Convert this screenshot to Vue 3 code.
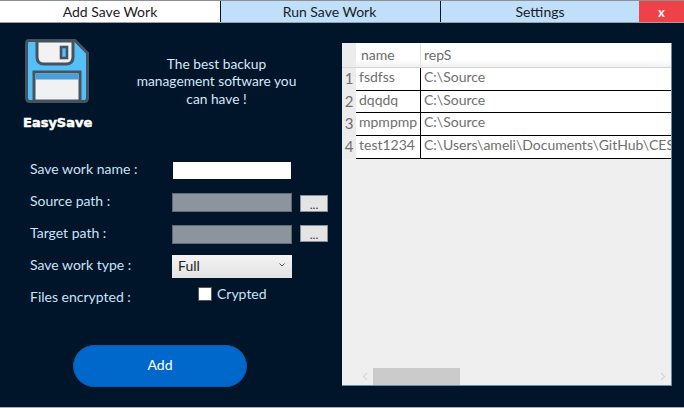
<script setup>
const tabs = [
  { label: 'Add Save Work', active: true },
  { label: 'Run Save Work', active: false },
  { label: 'Settings', active: false },
]

const fields = [
  { label: 'Save work name :', type: 'text' },
  { label: 'Source path :', type: 'path' },
  { label: 'Target path :', type: 'path' },
  { label: 'Save work type :', type: 'select' },
  { label: 'Files encrypted :', type: 'check' },
]

const rows = [
  { id: 1, name: 'fsdfss', repS: 'C:\\Source' },
  { id: 2, name: 'dqqdq', repS: 'C:\\Source' },
  { id: 3, name: 'mpmpmp', repS: 'C:\\Source' },
  { id: 4, name: 'test1234', repS: 'C:\\Users\\ameli\\Documents\\GitHub\\CESI\\Source' },
]
</script>

<template>
  <div class="window">
    <nav class="tabs">
      <div
        v-for="tab in tabs"
        :key="tab.label"
        class="tab"
        :class="{ active: tab.active }"
      >
        {{ tab.label }}
      </div>
      <div class="close">x</div>
    </nav>

    <main class="content">
      <section class="left">
        <div class="top">
          <div class="brand">
            <svg class="logo" viewBox="0 0 64 64" width="64" height="64">
              <path d="M4 1.5H50L62.5 14V59Q62.5 62.5 59 62.5H5Q1.5 62.5 1.5 59V4Q1.5 1.5 4 1.5Z" fill="#55c0f8" stroke="#46535f" stroke-width="3" />
              <path d="M12 2H48V18Q48 25 41 25H19Q12 25 12 18Z" fill="#f2f2f3" stroke="#46535f" stroke-width="3" />
              <rect x="36" y="8" width="6" height="11" fill="#55c0f8" stroke="#46535f" stroke-width="2.6" />
              <rect x="9" y="33" width="46" height="29" fill="#f0f1f3" stroke="#46535f" stroke-width="3" />
              <rect x="10.5" y="34.5" width="43" height="6" fill="#4a9fd8" />
            </svg>
            <div class="brand-name">EasySave</div>
          </div>
          <p class="tagline">The best backup<br />management software you<br />can have !</p>
        </div>

        <form class="form" @submit.prevent>
          <div v-for="field in fields" :key="field.label" class="form-row">
            <label class="label">{{ field.label }}</label>
            <div v-if="field.type === 'text'" class="input-white"></div>
            <template v-else-if="field.type === 'path'">
              <div class="input-grey"></div>
              <button type="button" class="browse">...</button>
            </template>
            <div v-else-if="field.type === 'select'" class="select">
              <span>Full</span>
              <svg width="6" height="4" viewBox="0 0 6 4"><path d="M0.5 0.5L3 3L5.5 0.5" fill="none" stroke="#555" stroke-width="1" /></svg>
            </div>
            <div v-else class="check">
              <span class="box"></span>
              <span>Crypted</span>
            </div>
          </div>
          <button type="button" class="add">Add</button>
        </form>
      </section>

      <section class="grid">
        <div class="table">
          <div class="head">
            <div class="row-head"></div>
            <div class="col-name">name</div>
            <div class="col-rep">repS</div>
          </div>
          <div v-for="row in rows" :key="row.id" class="row">
            <div class="row-head">{{ row.id }}</div>
            <div class="col-name cell">{{ row.name }}</div>
            <div class="col-rep cell">{{ row.repS }}</div>
          </div>
        </div>
        <div class="scrollbar">
          <svg class="arrow" width="6" height="9" viewBox="0 0 6 9"><path d="M5 1L1.5 4.5L5 8" fill="none" stroke="#d4d4d4" stroke-width="1.2" /></svg>
          <div class="track"><div class="thumb"></div></div>
          <svg class="arrow" width="6" height="9" viewBox="0 0 6 9"><path d="M1 1L4.5 4.5L1 8" fill="none" stroke="#d4d4d4" stroke-width="1.2" /></svg>
        </div>
      </section>
    </main>
  </div>
</template>

<style>
html, body { margin: 0; background: #00142a; }
</style>

<style scoped>
.window {
  width: 684px;
  height: 408px;
  display: flex;
  flex-direction: column;
  background: #00142a;
  font-family: Lato, "Open Sans", sans-serif;
  border-bottom: 1px solid #a8aeb4;
  box-sizing: border-box;
  overflow: hidden;
}

/* tabs */
.tabs {
  display: flex;
  height: 23px;
  box-sizing: border-box;
  border-top: 1px solid #8d9196;
  border-bottom: 1px solid #9aa0a6;
  flex-shrink: 0;
}
.tab {
  width: 219px;
  margin-right: 1px;
  background: #bfdffb;
  color: #1c1c1c;
  font-size: 14px;
  line-height: 21px;
  text-align: center;
}
.tab.active {
  width: 220px;
  background: #fff;
}
.tab:nth-child(2) { padding-right: 2px; width: 217px; }
.tab:nth-child(3) { width: 198px; margin-right: 0; }
.close {
  flex: 1;
  background: #ef4148;
  color: #fff;
  font-size: 13px;
  font-weight: 700;
  line-height: 22px;
  text-align: center;
}

.content {
  flex: 1;
  display: flex;
  min-height: 0;
}

/* left side */
.left {
  width: 342px;
  flex-shrink: 0;
  box-sizing: border-box;
  padding-top: 16px;
}
.top { display: flex; }
.brand {
  width: 115px;
  padding-left: 23px;
  box-sizing: border-box;
}
.logo { display: block; margin-left: 2px; }
.brand-name {
  margin-top: 12px;
  width: 72px;
  color: #fff;
  font-family: "DejaVu Sans", sans-serif;
  font-size: 13px;
  font-weight: 700;
  line-height: 16px;
  -webkit-text-stroke: 0.5px #fff;
}
.tagline {
  margin: 16px 0 0;
  width: 203px;
  color: #d3e8f8;
  font-size: 13.75px;
  line-height: 17.3px;
  text-align: center;
}

.form {
  margin-top: 23px;
  padding-left: 30px;
}
.form-row {
  display: flex;
  align-items: center;
  height: 32px;
}
.label {
  width: 142px;
  flex-shrink: 0;
  padding-bottom: 3px;
  color: #c9e3f8;
  font-size: 14px;
}
.input-white {
  width: 118px;
  height: 17px;
  margin-left: 1px;
  background: #fff;
}
.input-grey {
  width: 118px;
  height: 17px;
  background: #8c959e;
  border: 1px solid #5e6a76;
}
.browse {
  width: 28px;
  height: 17px;
  margin: 2px 0 0 8px;
  padding: 3px 0 0;
  border: 1px solid #8a9097;
  background: #e4e4e4;
  color: #333;
  font-family: inherit;
  font-size: 12px;
  line-height: 12px;
}
.form-row:nth-child(3) .browse { margin-top: -1px; }
.select {
  width: 120px;
  height: 23px;
  display: flex;
  align-items: center;
  justify-content: space-between;
  box-sizing: border-box;
  padding: 0 7px 2px 6px;
  background: linear-gradient(#f4f4f4, #e2e2e2);
  color: #222;
  font-size: 14px;
}
.check {
  display: flex;
  align-items: center;
  gap: 5px;
  margin: -10px 0 0 26px;
  color: #c9e3f8;
  font-size: 14px;
}
.box {
  width: 12px;
  height: 12px;
  background: #fff;
  border: 1px solid #555;
  margin-top: 2px;
}
.add {
  display: block;
  width: 174px;
  height: 42px;
  margin: 31px 0 0 43px;
  padding: 0 0 3px;
  border: 1px solid #0c5aa8;
  border-radius: 21px;
  background: #0068cb;
  color: #fff;
  font-family: inherit;
  font-size: 14px;
}

/* datagrid */
.grid {
  width: 330px;
  height: 343px;
  margin-top: 20px;
  display: flex;
  flex-direction: column;
  box-sizing: border-box;
  background: #efefef;
  border-right: 1px solid #6f8aa3;
  border-bottom: 1px solid #6f8aa3;
  overflow: hidden;
}
.table { flex: 1; font-size: 14px; }
.head, .row { display: flex; }
.head {
  height: 25px;
  background: linear-gradient(#fff 70%, #f1f1f1);
  border-bottom: 1px solid #d5d5d5;
  box-sizing: border-box;
  color: #6b6b6b;
  line-height: 24px;
}
.row {
  height: 22.7px;
  line-height: 18px;
  color: #6f6f6f;
}
.row-head {
  width: 14px;
  flex-shrink: 0;
  background: #ececec;
  color: #6f6f6f;
  font-size: 15px;
  line-height: 20px;
  text-align: center;
  box-sizing: border-box;
}
.col-name {
  width: 65px;
  flex-shrink: 0;
  box-sizing: border-box;
  padding-left: 5px;
}
.head .col-name { border-right: 1px solid #e2e2e2; }
.col-rep {
  flex: 1;
  min-width: 0;
  padding-left: 3px;
  white-space: nowrap;
  overflow: hidden;
}
.cell {
  background: #fff;
  border-bottom: 1px solid #000;
  box-sizing: border-box;
}
.col-name.cell {
  padding-left: 3px;
  border-right: 1px solid #000;
}
.scrollbar {
  height: 17px;
  display: flex;
  align-items: center;
  padding: 0 5px 0 20px;
  flex-shrink: 0;
}
.track {
  flex: 1;
  height: 100%;
  margin: 0 0 0 5px;
}
.thumb {
  width: 87px;
  height: 100%;
  background: #cbcbcb;
}
</style>
